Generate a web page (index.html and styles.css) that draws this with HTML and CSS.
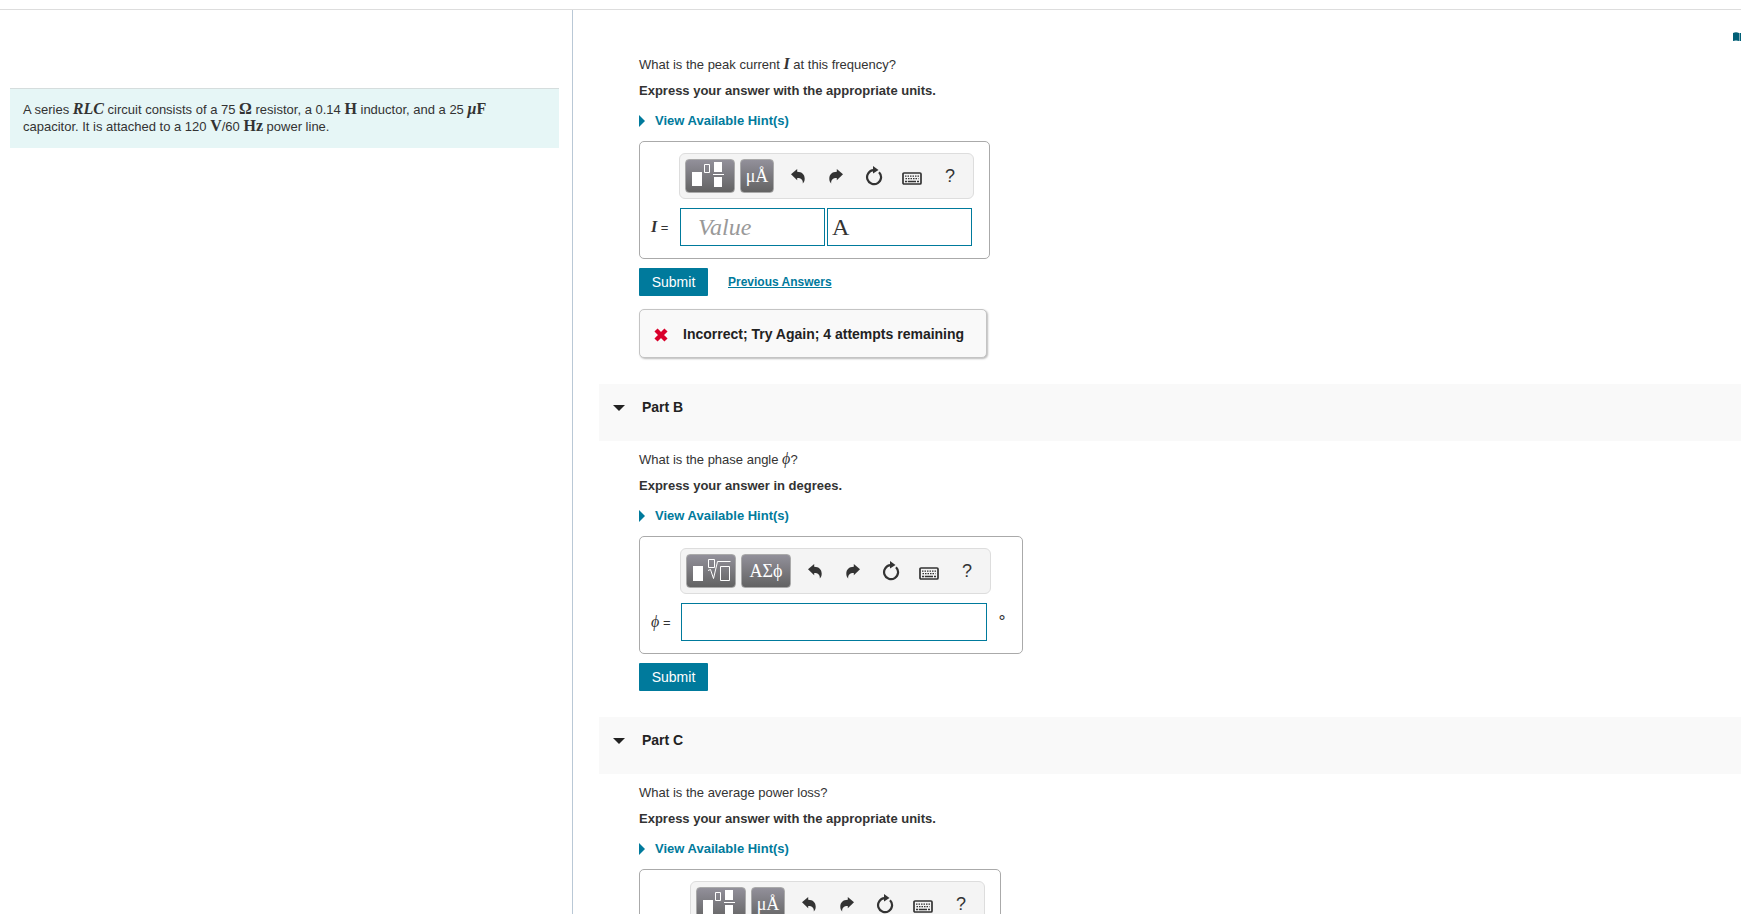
FILE: index.html
```html
<!DOCTYPE html>
<html lang="en">
<head>
<meta charset="utf-8">
<title>RLC circuit</title>
<link rel="stylesheet" href="styles.css">
</head>
<body>
<svg class="sprite" aria-hidden="true">
  <symbol id="undo" viewBox="0 0 14 15"><path d="M0 5.200 6.200 0v2.800c4.800 0 7.500 2.800 7.500 6.900 0 1.900-.7 3.600-1.900 4.900.4-3.800-1.600-5.700-5.600-5.700v2.300z"/></symbol>
  <symbol id="redo" viewBox="0 0 14 15"><path d="M14 5.200 7.800 0v2.800C3 2.800.3 5.600.3 9.700c0 1.900.7 3.600 1.900 4.900-.4-3.800 1.600-5.700 5.600-5.700v2.300z"/></symbol>
  <symbol id="reset" viewBox="0 0 18 20"><path d="M14 6.200A7 7 0 1 1 8.500 4.200" fill="none" stroke="currentColor" stroke-width="2.200"/><path d="M8 0l5.500 4-5.500 3.600z"/></symbol>
  <symbol id="keys" viewBox="0 0 20 13"><rect x="1" y="1" width="18" height="11" rx="1" fill="none" stroke="currentColor" stroke-width="1.700"/><path d="M3 4.200h14M3.500 6.600h13" fill="none" stroke="currentColor" stroke-width="1.300" stroke-dasharray="1.500 1"/><path d="M3 9.500h2.200M6 9.500h8M15 9.500h2" fill="none" stroke="currentColor" stroke-width="1.500"/></symbol>
  <symbol id="fraction" viewBox="0 0 47 32"><path d="M6 12h10v14H6zM28 2h8v10h-8zM28 17h8v10h-8zM27 14h11v1H27z"/><path d="M18.500 4.500h5v8h-5z" fill="none" stroke="currentColor"/></symbol>
  <symbol id="root" viewBox="0 0 47 32"><path d="M6 11h10v15H6z"/><path d="M21.500 4.500h6v8h-6zM33.500 11.500h9v14h-9zM21 15.500l2.500-1 3 9 4-17h13" fill="none" stroke="currentColor"/></symbol>
</svg>
<div class="page">
  <aside class="intro">
    <p class="problem">A series <i class="math">RLC</i> circuit consists of a 75 <span class="math">Ω</span> resistor, a 0.14 <span class="math">H</span> inductor, and a 25 <span class="math"><i>μ</i>F</span> capacitor. It is attached to a 120 <span class="math">V</span>/60 <span class="math">Hz</span> power line.</p>
  </aside>
  <main class="parts">
    <a class="book" href="#" aria-label="Review"><svg viewBox="0 0 8 10"><path fill="#005f76" d="M0 1q3-1.500 6 0v8q-3-1-6 0zM7 1h1v8H7z"/><path fill="#7fa9b5" d="M6 1h1v8H6z"/></svg></a>
    <section class="part first">
      <p class="line">What is the peak current <i class="math">I</i> at this frequency?</p>
      <p class="line strong">Express your answer with the appropriate units.</p>
      <a class="line hint" href="#">View Available Hint(s)</a>
      <div class="answer">
        <div class="toolbar">
          <button class="palette" aria-label="Templates"><svg class="template"><use href="#fraction"/></svg></button>
          <button class="palette units">μÅ</button>
          <span class="tools">
            <button class="tool" aria-label="Undo"><svg class="arrow"><use href="#undo"/></svg></button>
            <button class="tool" aria-label="Redo"><svg class="arrow"><use href="#redo"/></svg></button>
            <button class="tool" aria-label="Reset"><svg class="reset"><use href="#reset"/></svg></button>
            <button class="tool" aria-label="Keyboard shortcuts"><svg class="keys"><use href="#keys"/></svg></button>
            <button class="tool">?</button>
          </span>
        </div>
        <label class="symbol" for="current"><i class="math">I</i> =</label>
        <div class="fields">
          <input class="field" id="current" placeholder="Value">
          <input class="field unit" value="A" aria-label="Units">
        </div>
      </div>
      <div class="actions"><button class="submit">Submit</button><a class="previous" href="#">Previous Answers</a></div>
      <div class="feedback"><svg class="cross" viewBox="0 0 14 14"><path d="M2 2l10 10M12 2L2 12" stroke="#d9002b" stroke-width="4.400"/></svg>Incorrect; Try Again; 4 attempts remaining</div>
    </section>

    <h2 class="heading"><button class="toggle">Part B</button></h2>
    <section class="part">
      <p class="line">What is the phase angle <i class="math greek">ϕ</i>?</p>
      <p class="line strong">Express your answer in degrees.</p>
      <a class="line hint" href="#">View Available Hint(s)</a>
      <div class="answer angle">
        <div class="toolbar">
          <button class="palette" aria-label="Templates"><svg class="template"><use href="#root"/></svg></button>
          <button class="palette">ΑΣϕ</button>
          <span class="tools">
            <button class="tool" aria-label="Undo"><svg class="arrow"><use href="#undo"/></svg></button>
            <button class="tool" aria-label="Redo"><svg class="arrow"><use href="#redo"/></svg></button>
            <button class="tool" aria-label="Reset"><svg class="reset"><use href="#reset"/></svg></button>
            <button class="tool" aria-label="Keyboard shortcuts"><svg class="keys"><use href="#keys"/></svg></button>
            <button class="tool">?</button>
          </span>
        </div>
        <label class="symbol" for="phase"><i class="math greek">ϕ</i> =</label>
        <div class="fields">
          <input class="field wide" id="phase">
          <span class="degree">∘</span>
        </div>
      </div>
      <div class="actions"><button class="submit">Submit</button></div>
    </section>

    <h2 class="heading"><button class="toggle">Part C</button></h2>
    <section class="part">
      <p class="line">What is the average power loss?</p>
      <p class="line strong">Express your answer with the appropriate units.</p>
      <a class="line hint" href="#">View Available Hint(s)</a>
      <div class="answer power">
        <div class="toolbar">
          <button class="palette" aria-label="Templates"><svg class="template"><use href="#fraction"/></svg></button>
          <button class="palette units">μÅ</button>
          <span class="tools">
            <button class="tool" aria-label="Undo"><svg class="arrow"><use href="#undo"/></svg></button>
            <button class="tool" aria-label="Redo"><svg class="arrow"><use href="#redo"/></svg></button>
            <button class="tool" aria-label="Reset"><svg class="reset"><use href="#reset"/></svg></button>
            <button class="tool" aria-label="Keyboard shortcuts"><svg class="keys"><use href="#keys"/></svg></button>
            <button class="tool">?</button>
          </span>
        </div>
      </div>
    </section>
  </main>
</div>
</body>
</html>
```
FILE: styles.css
```css
* { box-sizing: border-box; }
body {
  margin: 0;
  padding-top: 9px;
  height: 100vh;
  overflow: hidden;
  background: #fff;
  color: #333;
  font: 13px/17px "Liberation Sans", Arial, sans-serif;
}
p, h2 { margin: 0; }
button { border: 0; padding: 0; background: none; color: inherit; font: inherit; }
svg { display: block; fill: currentColor; }
.sprite { display: none; }
.page {
  display: grid;
  grid-template-columns: 573px 1fr;
  height: 100%;
  border-top: 1px solid #ddd;
}
.intro { padding: 78px 13px 0 10px; border-right: 1px solid #b9c8d6; }
.problem {
  padding: 12px 50px 13px 13px;
  border-top: 1px solid #d5dddd;
  background: #e6f6f6;
}
.math { font-family: "Liberation Serif", serif; font-size: 16px; font-weight: bold; line-height: 1; }
.greek { font-weight: normal; }
.parts { position: relative; padding-left: 26px; overflow: hidden; }
.book { position: absolute; top: 22px; right: 0; width: 8px; height: 10px; }
.part { display: flex; flex-direction: column; align-items: flex-start; padding: 10px 0 26px 40px; }
.first { padding-top: 46px; }
.line { height: 17px; margin-bottom: 9px; }
.strong { font-weight: bold; margin-bottom: 13px; }
.hint {
  display: flex;
  align-items: center;
  gap: 10px;
  margin-bottom: 12px;
  color: #007a9c;
  font-weight: bold;
  text-decoration: none;
}
.hint::before { content: ""; border: solid transparent; border-width: 6px 0 6px 6px; border-left-color: #007a9c; }
.answer {
  display: grid;
  grid-template-columns: 28px auto;
  gap: 9px 0;
  padding: 11px 15px 12px 11px;
  border: 1px solid #aaa;
  border-radius: 5px;
}
.angle { grid-template-columns: 29px auto; }
.power { grid-template-columns: 39px auto; }
.toolbar {
  grid-column: 2;
  justify-self: start;
  display: flex;
  gap: 5px;
  height: 46px;
  padding: 5px 4px 5px 5px;
  border: 1px solid #ddd;
  border-radius: 6px;
  background: #f4f4f4;
}
.palette {
  width: 50px;
  height: 34px;
  border: 1px solid #aaa;
  border-radius: 4px;
  background: linear-gradient(#92909a, #636363);
  color: #fff;
  font: 18px/30px "Liberation Serif", serif;
}
.units { width: 34px; }
.template { width: 47px; height: 32px; }
.tools { display: flex; }
.tool { display: grid; place-items: center; width: 38px; height: 34px; font-size: 18px; }
.arrow { width: 14px; height: 15px; }
.reset { width: 18px; height: 20px; }
.keys { width: 20px; height: 13px; margin-top: 4px; }
.symbol { align-self: center; white-space: nowrap; }
.fields { display: flex; gap: 2px; padding-left: 1px; }
.field {
  width: 145px;
  height: 38px;
  padding: 0 17px;
  border: 1px solid #007a9c;
  background: #fff;
  color: #333;
  font: 24px "Liberation Serif", serif;
}
.field::placeholder { color: #999; opacity: 1; font-style: italic; }
.unit { padding: 0 4px; }
.wide { width: 306px; }
.degree { padding: 6px 0 0 8px; font-size: 16px; }
.actions { display: flex; align-items: center; gap: 20px; margin-top: 9px; }
.submit { width: 69px; height: 28px; border-radius: 1px; background: #007a9c; color: #fff; font-size: 14px; }
.previous { color: #007a9c; font-size: 12px; font-weight: bold; }
.feedback {
  display: flex;
  align-items: center;
  gap: 15px;
  min-width: 348px;
  margin-top: 13px;
  padding: 16px 14px 14px;
  border: 1px solid #c4c4c4;
  border-radius: 5px;
  background: #f9f9f9;
  box-shadow: 1px 1px 2px #bbb;
  color: #222;
  font-size: 14px;
  font-weight: bold;
}
.cross { width: 14px; height: 14px; }
.heading { height: 57px; padding: 15px 14px; background: #f9f9f9; }
.toggle { display: flex; align-items: center; gap: 17px; color: #222; font-size: 14px; font-weight: bold; }
.toggle::before { content: ""; border: solid transparent; border-width: 6px 6px 0; border-top-color: #222; }
```
